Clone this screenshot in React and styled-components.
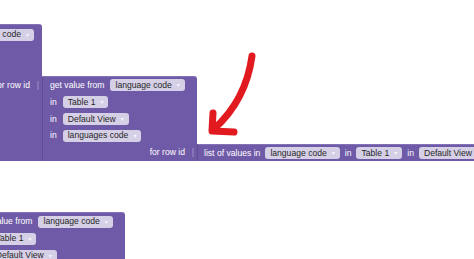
import React from 'react'
import styled, { createGlobalStyle } from 'styled-components'

const GlobalStyle = createGlobalStyle`
  html, body {
    margin: 0;
    padding: 0;
    background: #ffffff;
  }
  body {
    font-family: "Liberation Sans", Arial, sans-serif;
  }
`

const BLOCK = '#6f5aa8'

function Field({ children }) {
  return (
    <FieldBox>
      {children}
      <Caret>▾</Caret>
    </FieldBox>
  )
}

function GetValueRows({ last }) {
  return (
    <>
      <Row>
        <Label>get value from</Label>
        <Field>language code</Field>
      </Row>
      <Row>
        <Label>in</Label>
        <Field>Table 1</Field>
      </Row>
      <Row>
        <Label>in</Label>
        <Field>Default View</Field>
      </Row>
      <Row>
        <Label>in</Label>
        <Field>languages code</Field>
      </Row>
      {last}
    </>
  )
}

export default function App() {
  return (
    <>
      <GlobalStyle />
      <Canvas>
        {/* outer block with the get-value block plugged into its "for row id" input */}
        <Stack x={-100} y={24}>
          <OuterCol>
            <Row>
              <Label>get value from</Label>
              <Field>language code</Field>
            </Row>
            <Row style={{ marginTop: '34px' }}>
              <Label>for row id</Label>
              <Socket />
            </Row>
          </OuterCol>
          <Nested>
            <GetCol>
              <GetValueRows
                last={
                  <Row align="flex-end">
                    <Label>for row id</Label>
                    <Socket />
                  </Row>
                }
              />
            </GetCol>
            <ListBlock>
              <Label>list of values in</Label>
              <Field>language code</Field>
              <Label>in</Label>
              <Field>Table 1</Field>
              <Label>in</Label>
              <Field>Default View</Field>
            </ListBlock>
          </Nested>
        </Stack>

        <Stack x={-30} y={212}>
          <GetCol>
            <GetValueRows />
          </GetCol>
        </Stack>

        <ArrowMark viewBox="0 0 474 259" width="474" height="259">
          <g fill="none" stroke="#e11a1f" strokeWidth="7" strokeLinecap="round" strokeLinejoin="round">
            <path d="M252 56 Q246 100 214 129" />
            <path d="M213 113 L212 131 L234 132" />
          </g>
        </ArrowMark>
      </Canvas>
    </>
  )
}

const Canvas = styled.div`
  position: relative;
  width: 474px;
  height: 259px;
  overflow: hidden;
  background: #ffffff;
`

const Stack = styled.div`
  position: absolute;
  left: ${(props) => props.x}px;
  top: ${(props) => props.y}px;
  display: flex;
  align-items: flex-start;
`

const OuterCol = styled.div`
  width: 142px;
  height: 137px;
  box-sizing: border-box;
  display: flex;
  flex-direction: column;
  align-items: flex-end;
  padding: 1px 3px 0 0;
  background: ${BLOCK};
  border-top: 1px solid #8472b8;
  border-radius: 0 3px 0 0;
`

const Nested = styled.div`
  margin-top: 52px;
  display: flex;
  align-items: flex-end;
`

const GetCol = styled.div`
  width: 155px;
  height: 85px;
  box-sizing: border-box;
  display: flex;
  flex-direction: column;
  padding: 0 3px 0 7px;
  background: ${BLOCK};
  border-left: 1px solid #5f4c96;
  border-top: 1px solid #8472b8;
  border-radius: 0 3px 0 0;
`

const ListBlock = styled.div`
  height: 17px;
  box-sizing: border-box;
  display: flex;
  align-items: center;
  gap: 5px;
  padding: 0 8px 0 6px;
  background: ${BLOCK};
  border-left: 1px solid #5f4c96;
  border-top: 1px solid #8472b8;
  white-space: nowrap;
`

const Row = styled.div`
  height: 17px;
  display: flex;
  align-items: center;
  align-self: ${(props) => props.align || 'auto'};
  gap: 6px;
  white-space: nowrap;
  &:first-child {
    padding-right: 5px;
  }
`

const Label = styled.span`
  color: #ffffff;
  font-size: 8.6px;
  line-height: 1;
`

const FieldBox = styled.span`
  display: inline-flex;
  align-items: center;
  gap: 5px;
  height: 12px;
  padding: 0 5px;
  border-radius: 3px;
  background: #d6d0e6;
  color: #262626;
  font-size: 8.6px;
  line-height: 1;
`

const Caret = styled.span`
  font-family: "DejaVu Sans", sans-serif;
  font-size: 6px;
  color: #f7f6fb;
`

const Socket = styled.span`
  width: 2px;
  height: 9px;
  margin-left: 1px;
  background: rgba(255, 255, 255, 0.16);
`

const ArrowMark = styled.svg`
  position: absolute;
  left: 0;
  top: 0;
  pointer-events: none;
`
